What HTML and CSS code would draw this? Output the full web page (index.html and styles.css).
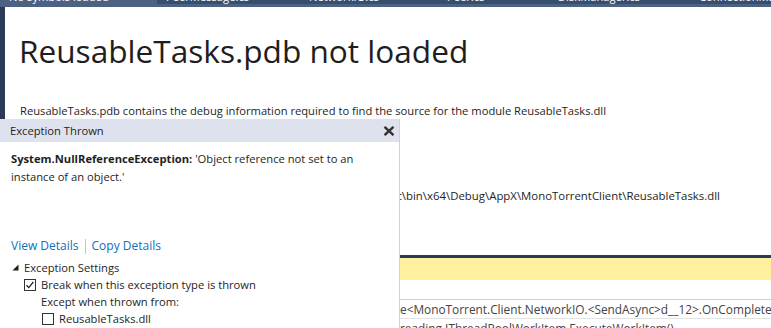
FILE: index.html
```html
<!DOCTYPE html>
<html lang="en">
  <head>
    <meta charset="UTF-8" />
    <title>ReusableTasks.pdb not loaded</title>
    <link rel="stylesheet" href="styles.css">
  </head>
  <body>
    <div class="tabs">
      <div class="tab tab-active tab-1">No symbols loaded</div>
      <div class="tab tab-2">PeerMessage.cs</div>
      <div class="tab tab-3">NetworkIO.cs</div>
      <div class="tab tab-4">Peer.cs</div>
      <div class="tab tab-5">DiskManager.cs</div>
      <div class="tab tab-6">ConnectionManager.cs</div>
    </div>

    <div class="doc">
      <h1 class="title">ReusableTasks.pdb not loaded</h1>
      <p class="desc">ReusableTasks.pdb contains the debug information required to find the source for the module ReusableTasks.dll</p>
      <p class="path">Module Information: C:\src\monotorrent\src\bin\x64\Debug\AppX\MonoTorrentClient\ReusableTasks.dll</p>

      <div class="editor">
        <div class="editor-bar"></div>
        <div class="editor-line"></div>
        <div class="editor-blank"></div>
      </div>

      <div class="stack">
        <div class="stack-row">e&lt;MonoTorrent.Client.NetworkIO.&lt;SendAsync&gt;d__12&gt;.OnCompleted</div>
        <div class="stack-row">reading.IThreadPoolWorkItem.ExecuteWorkItem()</div>
      </div>
    </div>

    <div class="popup">
      <div class="popup-header">
        <span>Exception Thrown</span>
        <svg class="close" width="12" height="10" viewBox="0 0 12 10">
          <path d="M1.5 0.8 L10.5 9.2 M10.5 0.8 L1.5 9.2" stroke="#333" stroke-width="2.4" fill="none" />
        </svg>
      </div>
      <div class="popup-body">
        <p class="message"><strong>System.NullReferenceException:</strong> 'Object reference not set to an instance of an object.'</p>

        <div class="links">
          <a href="#">View Details</a>
          <span class="sep"></span>
          <a href="#">Copy Details</a>
        </div>

        <div class="settings">
          <div class="settings-head">
            <svg class="arrow" width="7" height="7" viewBox="0 0 7 7">
              <path d="M6.5 0.5 L6.5 6.5 L0.5 6.5 Z" fill="#1e1e1e" />
            </svg>
            <span>Exception Settings</span>
          </div>
          <label class="check-row">
            <svg class="box" width="12" height="12" viewBox="0 0 12 12">
              <rect x="0.5" y="0.5" width="11" height="11" fill="#fff" stroke="#333" />
              <path d="M2.5 6.2 L4.8 8.6 L9.4 2.8" stroke="#1e1e1e" stroke-width="1.3" fill="none" />
            </svg>
            <span>Break when this exception type is thrown</span>
          </label>
          <div class="except">Except when thrown from:</div>
          <label class="check-row check-sub">
            <svg class="box" width="12" height="12" viewBox="0 0 12 12">
              <rect x="0.5" y="0.5" width="11" height="11" fill="#fff" stroke="#333" />
            </svg>
            <span>ReusableTasks.dll</span>
          </label>
        </div>
      </div>
    </div>
  </body>
</html>
```

FILE: styles.css
```css
body {
  font-family: 'Open Sans', 'Noto Sans', sans-serif;
  font-size: 11.2px;
  color: #1e1e1e;
  margin: 0;
  padding: 0;
  background-color: #fff;
  width: 771px;
  height: 328px;
  overflow: hidden;
  position: relative;
}

/* document tabs, mostly scrolled off the top */
.tabs {
  display: flex;
  height: 4px;
  overflow: hidden;
  background-color: #364f6f;
  border-bottom: 3px solid #4d6183;
}

.tab {
  flex: none;
  height: 16px;
  margin-top: -11px;
  padding-left: 9px;
  line-height: 16px;
  color: #fff;
  white-space: nowrap;
  box-sizing: border-box;
}

.tab-active {
  background-color: #4d6183;
}

.tab-1 { width: 157px; }
.tab-2 { width: 143px; }
.tab-3 { width: 138px; }
.tab-4 { width: 111px; }
.tab-5 { width: 141px; }
.tab-6 { width: 100px; }

.doc {
  border-left: 5px solid #2b3a57;
  height: 321px;
}

.title {
  margin: 0;
  padding: 24px 0 0 14px;
  font-size: 31.6px;
  font-weight: 400;
  line-height: 40px;
  white-space: nowrap;
}

.desc {
  margin: 32px 0 0 15px;
  line-height: 16px;
  white-space: nowrap;
}

.path {
  margin: 69px 0 0 15px;
  width: 700px;
  font-size: 11.4px;
  line-height: 16px;
  text-align: right;
  white-space: nowrap;
}

.editor {
  margin-top: 51px;
}

.editor-bar {
  height: 3px;
  background-color: #2b3a57;
}

.editor-line {
  height: 22px;
  background-color: #fef09d;
}

.editor-blank {
  height: 19px;
}

.stack {
  border-top: 1px solid #cfcfcf;
}

.stack-row {
  padding-left: 395px;
  height: 18px;
  font-size: 11.85px;
  line-height: 18px;
  color: #444;
  white-space: nowrap;
  overflow: hidden;
  border-bottom: 1px solid #e2e2e2;
}

/* exception helper popup */
.popup {
  position: absolute;
  left: 0;
  top: 119px;
  width: 399px;
  bottom: 0;
  background-color: #fff;
  border-right: 1px solid #cdd2de;
}

.popup-header {
  display: flex;
  justify-content: space-between;
  align-items: center;
  height: 23px;
  padding: 0 4px 0 10px;
  background-color: #dee2ee;
}

.popup-body {
  padding: 8px 11px 0 11px;
}

.message {
  margin: 0;
  line-height: 18px;
}

.links {
  display: flex;
  align-items: center;
  margin-top: 51px;
  font-size: 12px;
  line-height: 18px;
}

.links a {
  color: #0e70c0;
  text-decoration: none;
}

.sep {
  width: 1px;
  height: 15px;
  margin: 0 6px;
  background-color: #c6c6c6;
}

.settings {
  margin-top: 4px;
  line-height: 17px;
}

.settings-head {
  display: flex;
  align-items: center;
  gap: 5px;
  padding-left: 1px;
}

.check-row {
  display: flex;
  align-items: center;
  gap: 5px;
  padding-left: 13px;
}

.except {
  padding-left: 30px;
}

.check-row.check-sub {
  padding-left: 31px;
}
```
